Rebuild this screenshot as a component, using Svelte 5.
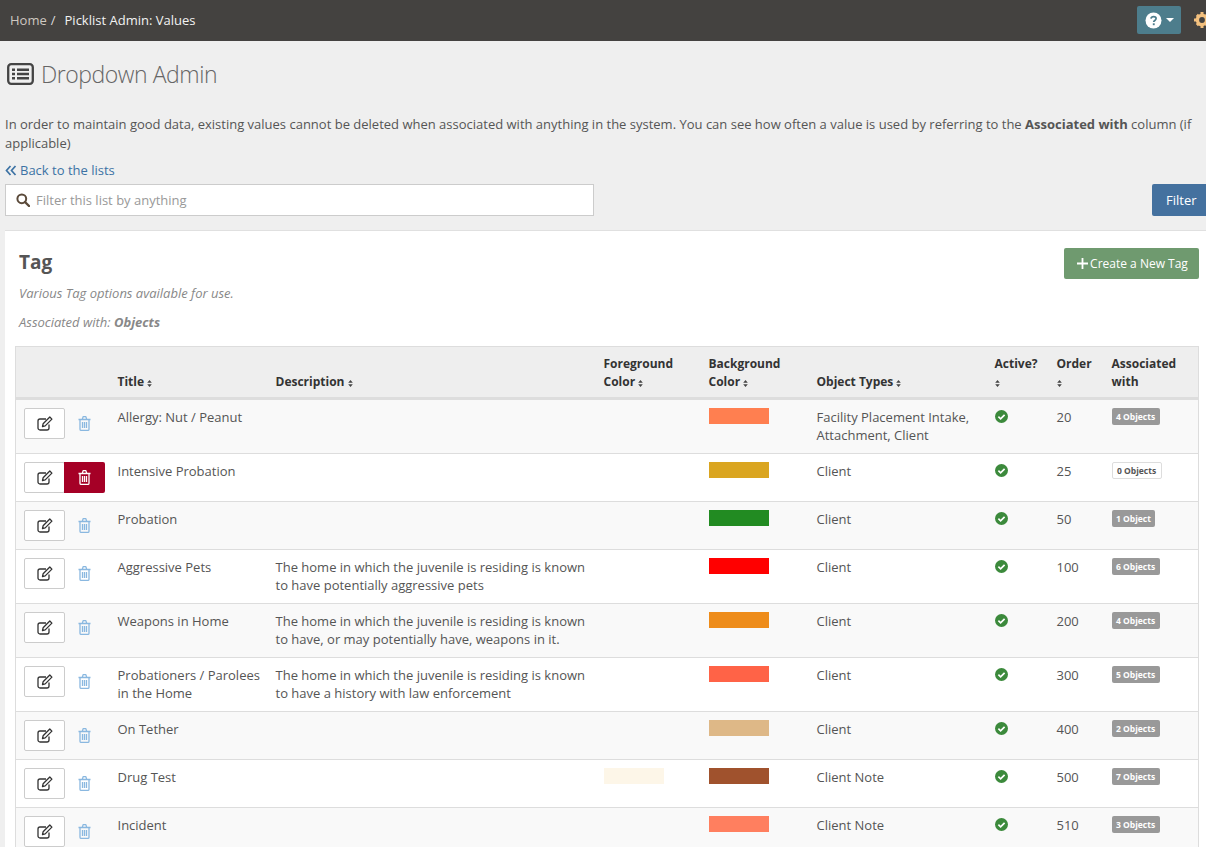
<script>
	const columns = [
		{ label: 'Title', width: 158 },
		{ label: 'Description', width: 328 },
		{ label: 'Foreground Color', width: 105 },
		{ label: 'Background Color', width: 108 },
		{ label: 'Object Types', width: 178 },
		{ label: 'Active?', width: 62 },
		{ label: 'Order', width: 55 }
	]

	const homeText = 'The home in which the juvenile is residing is known'

	const rows = [
		{ title: 'Allergy: Nut / Peanut', bg: '#ff7f50', types: 'Facility Placement Intake, Attachment, Client', order: 20, count: '4 Objects' },
		{ title: 'Intensive Probation', bg: '#daa520', types: 'Client', order: 25, count: '0 Objects', hover: true },
		{ title: 'Probation', bg: '#228b22', types: 'Client', order: 50, count: '1 Object' },
		{ title: 'Aggressive Pets', desc: homeText + ' to have potentially aggressive pets', bg: '#ff0000', types: 'Client', order: 100, count: '6 Objects' },
		{ title: 'Weapons in Home', desc: homeText + ' to have, or may potentially have, weapons in it.', bg: '#ee8c1a', types: 'Client', order: 200, count: '4 Objects' },
		{ title: 'Probationers / Parolees in the Home', desc: homeText + ' to have a history with law enforcement', bg: '#ff6347', types: 'Client', order: 300, count: '5 Objects' },
		{ title: 'On Tether', bg: '#deb887', types: 'Client', order: 400, count: '2 Objects' },
		{ title: 'Drug Test', fg: '#fdf6e8', bg: '#a0522d', types: 'Client Note', order: 500, count: '7 Objects' },
		{ title: 'Incident', bg: '#ff7f5f', types: 'Client Note', order: 510, count: '3 Objects' }
	]
</script>

<style>
	:global(body) {
		margin: 0;
		overflow: hidden;
		background: #efefef;
	}

	.page {
		width: 1206px;
		height: 847px;
		overflow: hidden;
		font-family: 'Open Sans', sans-serif;
		font-size: 13px;
		line-height: 18px;
		color: #555;
	}

	.topbar {
		height: 41px;
		box-sizing: border-box;
		padding-bottom: 1px;
		background: #444240;
		display: flex;
		align-items: center;
		padding-left: 10px;
		color: #f2f2f2;
	}

	.crumb {
		color: #cfc8c0;
	}

	.sep {
		color: #ddd;
		margin: 0 9px 0 4px;
	}

	.tools {
		margin-left: auto;
		display: flex;
		align-items: center;
		width: 69px;
		overflow: hidden;
		flex-shrink: 0;
	}

	.help {
		width: 44px;
		height: 28px;
		flex-shrink: 0;
		background: #4d7d8c;
		border-radius: 2px;
		display: flex;
		align-items: center;
		justify-content: center;
		gap: 4px;
	}

	.caret {
		width: 0;
		height: 0;
		border-left: 4px solid transparent;
		border-right: 4px solid transparent;
		border-top: 4px solid #fff;
	}

	.gear {
		margin-left: 13px;
		flex-shrink: 0;
	}

	h1 {
		margin: 0;
		padding: 16px 0 0 7px;
		display: flex;
		align-items: center;
		gap: 7px;
		height: 34px;
		font-size: 23px;
		font-weight: 300;
		color: #666;
		letter-spacing: -0.45px;
	}

	.intro {
		margin: 24px 0 0;
		padding: 0 5px;
		line-height: 19px;
	}

	.back {
		display: flex;
		align-items: center;
		gap: 3px;
		margin: 8px 0 0 5px;
		color: #3c72a4;
		line-height: 18px;
	}

	.filter {
		display: flex;
		justify-content: space-between;
		margin: 5px -4px 0 5px;
	}

	.search {
		width: 589px;
		height: 32px;
		box-sizing: border-box;
		border: 1px solid #ccc;
		background: #fff;
		display: flex;
		align-items: center;
		gap: 6px;
		padding-left: 10px;
		color: #999;
	}

	.filter-btn {
		width: 58px;
		height: 32px;
		background: #44719f;
		color: #fff;
		border-radius: 2px 0 0 2px;
		display: flex;
		align-items: center;
		padding-left: 14px;
		box-sizing: border-box;
	}

	.panel {
		margin: 14px 0 0 5px;
		background: #fff;
		border-top: 1px solid #e0e0e0;
		padding: 17px 7px 0 10px;
		height: 600px;
	}

	.panel-head {
		display: flex;
		justify-content: space-between;
		align-items: flex-start;
		padding-left: 4px;
	}

	h2 {
		margin: 0;
		padding-top: 1px;
		font-size: 19px;
		line-height: 26px;
		font-weight: 700;
		color: #555;
	}

	.create {
		width: 135px;
		height: 31px;
		box-sizing: border-box;
		padding-left: 2px;
		background: #6f9a6f;
		color: #fff;
		border-radius: 2px;
		display: flex;
		align-items: center;
		justify-content: center;
		gap: 2px;
		font-size: 12px;
	}

	.note {
		margin: 0;
		padding-left: 4px;
		font-size: 13px;
		font-style: italic;
		color: #888;
		line-height: 18px;
	}

	.note.first {
		margin-top: 5px;
	}

	.note.second {
		margin-top: 11px;
	}

	table {
		margin-top: 15px;
		width: 1184px;
		table-layout: fixed;
		border-collapse: collapse;
		border: 1px solid #ddd;
	}

	th {
		background: #eeeeee;
		border-bottom: 3px solid #ddd;
		padding: 8px 9px 6px;
		text-align: left;
		vertical-align: bottom;
		font-size: 12px;
		font-weight: 700;
		color: #333;
		line-height: 18px;
	}

	td {
		padding: 8px 9px 9px;
		vertical-align: top;
		border-top: 1px solid #ddd;
		background: #fff;
	}

	td.title {
		padding-right: 5px;
	}

	tbody tr:nth-child(odd) td {
		background: #f9f9f9;
	}

	tbody tr:first-child td {
		border-top: 0;
	}

	.sort {
		display: inline-block;
		vertical-align: -1px;
	}

	.actions {
		display: flex;
		margin: 0 0 -1px -1px;
	}

	.edit, .del {
		width: 41px;
		height: 31px;
		flex-shrink: 0;
		box-sizing: border-box;
		display: flex;
		align-items: center;
		justify-content: center;
	}

	.edit {
		background: #fff;
		border: 1px solid #ccc;
		border-radius: 2px;
	}

	.del {
		color: #8ab8e0;
		margin-left: -1px;
		border-radius: 0 2px 2px 0;
	}

	.del.hover {
		background: #a50026;
		color: #fff;
	}

	.swatch {
		width: 60px;
		height: 16px;
	}

	.check {
		display: block;
		margin-top: 2px;
	}

	.badge {
		display: inline-block;
		height: 17px;
		line-height: 17px;
		padding: 0 4.5px;
		box-sizing: border-box;
		border-radius: 2px;
		background: #999;
		color: #fff;
		font-size: 8.5px;
		font-weight: 700;
		vertical-align: top;
	}

	.badge.empty {
		background: #fff;
		color: #555;
		border: 1px solid #ddd;
		line-height: 15px;
	}
</style>

<div class="page">
	<div class="topbar">
		<span class="crumb">Home</span>
		<span class="sep">/</span>
		<span>Picklist Admin: Values</span>
		<div class="tools">
			<div class="help">
				<svg width="17" height="17" viewBox="0 0 17 17">
					<circle cx="8.5" cy="8.5" r="8" fill="#fff" />
					<path d="M6 6.6c.2-1.3 1.2-2 2.6-2 1.5 0 2.5.8 2.5 2 0 1.9-2.4 1.8-2.4 3.5" fill="none" stroke="#4d7d8c" stroke-width="1.7" />
					<rect x="7.8" y="11.3" width="1.9" height="1.9" fill="#4d7d8c" />
				</svg>
				<span class="caret"></span>
			</div>
			<svg class="gear" width="16" height="16" viewBox="0 0 16 16">
				<circle cx="8" cy="8" r="4.6" fill="none" stroke="#f3c07e" stroke-width="3.4" />
				<path d="M6.5 0h3v3h-3zM6.5 13h3v3h-3zM0 6.5h3v3H0zM13 6.5h3v3h-3zM1.8 3.9l2.1-2.1 2 2-2.1 2.1zM10.100 12.200l2.100-2.100 2 2-2.100 2.100zM1.800 12.100l2-2 2.100 2.100-2 2zM10.100 3.800l2.100-2 2 2-2 2.100z" fill="#f3c07e" />
			</svg>
		</div>
	</div>

	<h1>
		<svg width="27" height="22" viewBox="0 0 27 22">
			<rect x="1.200" y="1.200" width="24.600" height="19.600" rx="3" fill="none" stroke="#444" stroke-width="2.300" />
			<path d="M5 5.500h3v2.500H5zM5 9.800h3v2.500H5zM5 14h3v2.500H5zM10 5.500h12v2.500H10zM10 9.800h12v2.500H10zM10 14h12v2.500H10z" fill="#444" />
		</svg>
		Dropdown Admin
	</h1>

	<p class="intro">In order to maintain good data, existing values cannot be deleted when associated with anything in the system. You can see how often a value is used by referring to the <b>Associated with</b> column (if applicable)</p>

	<div class="back">
		<svg width="12" height="11" viewBox="0 0 12 11">
			<path d="M5.500 1 1.500 5.500l4 4.500M10.500 1l-4 4.500 4 4.500" fill="none" stroke="#3c72a4" stroke-width="1.700" />
		</svg>
		Back to the lists
	</div>

	<div class="filter">
		<div class="search">
			<svg width="14" height="14" viewBox="0 0 14 14">
				<circle cx="5.800" cy="5.800" r="4.400" fill="none" stroke="#5b4a3a" stroke-width="2" />
				<path d="M9 9l4 4" stroke="#5b4a3a" stroke-width="2.400" stroke-linecap="round" />
			</svg>
			Filter this list by anything
		</div>
		<div class="filter-btn">Filter</div>
	</div>

	<div class="panel">
		<div class="panel-head">
			<h2>Tag</h2>
			<div class="create">
				<svg width="11" height="11" viewBox="0 0 11 11">
					<path d="M4.600 0h1.800v4.600H11v1.800H6.400V11H4.600V6.400H0V4.600h4.600z" fill="#fff" />
				</svg>
				Create a New Tag
			</div>
		</div>
		<p class="note first">Various Tag options available for use.</p>
		<p class="note second">Associated with: <b>Objects</b></p>

		<table>
			<colgroup>
				<col style="width: 93px" />
				{#each columns as col}
					<col style="width: {col.width}px" />
				{/each}
				<col />
			</colgroup>
			<thead>
				<tr>
					<th></th>
					{#each columns as col}
						<th>{col.label} <svg class="sort" width="5" height="7" viewBox="0 0 5 7"><path d="M2.500 0l2.300 2.800H.2zM2.500 7L.2 4.200h4.600z" fill="#444" /></svg></th>
					{/each}
					<th>Associated with</th>
				</tr>
			</thead>
			<tbody>
				{#each rows as row}
					<tr>
						<td>
							<div class="actions">
								<div class="edit">
									<svg width="16" height="15" viewBox="0 0 16 15">
										<path d="M12 8.500V12a2 2 0 0 1-2 2H3a2 2 0 0 1-2-2V5a2 2 0 0 1 2-2h6" fill="none" stroke="#333" stroke-width="1.300" />
										<path d="M5.500 10.500l.6-2.700L12.800 1l2.100 2.100-6.700 6.800z" fill="none" stroke="#333" stroke-width="1.300" stroke-linejoin="round" />
									</svg>
								</div>
								<div class="del" class:hover={row.hover}>
									<svg width="13" height="15" viewBox="0 0 13 15">
										<path d="M.5 3.500h12M2 3.500v9.700c0 .7.500 1.200 1.200 1.200h6.600c.7 0 1.200-.5 1.200-1.200V3.500M4.300 3.300l.7-2.200c.1-.3.400-.6.800-.6h1.400c.4 0 .7.300.8.600l.7 2.200M4.500 6v6M6.500 6v6M8.500 6v6" fill="none" stroke="currentColor" stroke-width="1.300" />
									</svg>
								</div>
							</div>
						</td>
						<td class="title">{row.title}</td>
						<td>{row.desc ?? ''}</td>
						<td>
							{#if row.fg}
								<div class="swatch" style="background: {row.fg}"></div>
							{/if}
						</td>
						<td><div class="swatch" style="background: {row.bg}"></div></td>
						<td>{row.types}</td>
						<td>
							<svg class="check" width="13" height="13" viewBox="0 0 13 13">
								<circle cx="6.500" cy="6.500" r="6.500" fill="#3c8a3c" />
								<path d="M3.400 6.700l2.200 2.100 4-4" fill="none" stroke="#fff" stroke-width="1.700" />
							</svg>
						</td>
						<td>{row.order}</td>
						<td><span class="badge" class:empty={row.count.startsWith('0')}>{row.count}</span></td>
					</tr>
				{/each}
			</tbody>
		</table>
	</div>
</div>
